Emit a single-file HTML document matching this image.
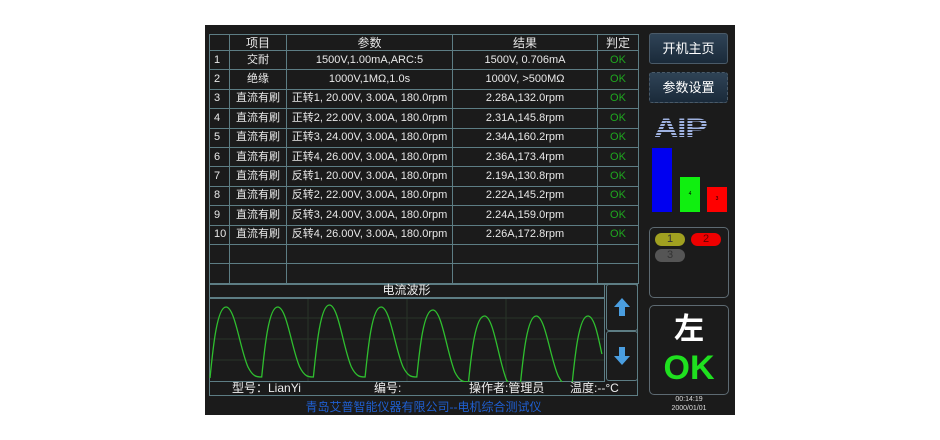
<!DOCTYPE html>
<html><head><meta charset="utf-8"><style>
*{margin:0;padding:0;box-sizing:border-box}
body{width:940px;height:440px;background:#fff;position:relative;overflow:hidden;font-family:"Liberation Sans","Noto Sans CJK SC",sans-serif}
.scr{position:absolute;left:205px;top:25px;width:530px;height:390px;background:#1b1b1b}
.a{position:absolute}
table{position:absolute;left:209px;top:34px;border-collapse:collapse;table-layout:fixed;color:#e8e8e8;font-size:11px}
td{border:1px solid #5d7d84;text-align:center;white-space:nowrap;overflow:hidden;height:19.4px;padding:0;line-height:17px;vertical-align:middle}
tr.h td{height:16px;font-size:12px;line-height:14px}
td.n{text-align:left;padding-left:4px}
td.ok{color:#1fa71f}
.btn{position:absolute;left:649px;width:79px;height:31px;border:1px solid #4a5a68;border-radius:3px;background:linear-gradient(#2f4356,#1a2a3a);color:#fff;font-size:13px;text-align:center;line-height:29px}
.pill{position:absolute;height:13px;width:30px;border-radius:7px;font-size:11px;line-height:13px;text-align:center}
</style></head><body>
<div class="scr"></div>
<table>
<colgroup><col style="width:20px"><col style="width:57px"><col style="width:166px"><col style="width:145px"><col style="width:41px"></colgroup>
<tr class="h"><td></td><td>项目</td><td>参数</td><td>结果</td><td>判定</td></tr>
<tr><td class="n">1</td><td>交耐</td><td>1500V,1.00mA,ARC:5</td><td>1500V, 0.706mA</td><td class="ok">OK</td></tr>
<tr><td class="n">2</td><td>绝缘</td><td>1000V,1MΩ,1.0s</td><td>1000V, &gt;500MΩ</td><td class="ok">OK</td></tr>
<tr><td class="n">3</td><td>直流有刷</td><td>正转1, 20.00V, 3.00A, 180.0rpm</td><td>2.28A,132.0rpm</td><td class="ok">OK</td></tr>
<tr><td class="n">4</td><td>直流有刷</td><td>正转2, 22.00V, 3.00A, 180.0rpm</td><td>2.31A,145.8rpm</td><td class="ok">OK</td></tr>
<tr><td class="n">5</td><td>直流有刷</td><td>正转3, 24.00V, 3.00A, 180.0rpm</td><td>2.34A,160.2rpm</td><td class="ok">OK</td></tr>
<tr><td class="n">6</td><td>直流有刷</td><td>正转4, 26.00V, 3.00A, 180.0rpm</td><td>2.36A,173.4rpm</td><td class="ok">OK</td></tr>
<tr><td class="n">7</td><td>直流有刷</td><td>反转1, 20.00V, 3.00A, 180.0rpm</td><td>2.19A,130.8rpm</td><td class="ok">OK</td></tr>
<tr><td class="n">8</td><td>直流有刷</td><td>反转2, 22.00V, 3.00A, 180.0rpm</td><td>2.22A,145.2rpm</td><td class="ok">OK</td></tr>
<tr><td class="n">9</td><td>直流有刷</td><td>反转3, 24.00V, 3.00A, 180.0rpm</td><td>2.24A,159.0rpm</td><td class="ok">OK</td></tr>
<tr><td class="n">10</td><td>直流有刷</td><td>反转4, 26.00V, 3.00A, 180.0rpm</td><td>2.26A,172.8rpm</td><td class="ok">OK</td></tr>
<tr><td></td><td></td><td></td><td></td><td></td></tr>
<tr><td></td><td></td><td></td><td></td><td></td></tr>
</table>
<div class="a" style="left:209px;top:284px;width:429px;height:112px;border:1px solid #5d7d84"></div>
<div class="a" style="left:209px;top:284px;width:396px;height:14px;border-bottom:1px solid #5d7d84;border-right:1px solid #5d7d84;color:#eee;font-size:12px;text-align:center;line-height:13px">电流波形</div>
<svg class="a" style="left:209px;top:298px" width="396" height="84">
<g stroke="#283528" stroke-width="1">
<line x1="0" y1="20" x2="396" y2="20"/><line x1="0" y1="41" x2="396" y2="41"/><line x1="0" y1="62" x2="396" y2="62"/>
<line x1="99" y1="0" x2="99" y2="84"/><line x1="198" y1="0" x2="198" y2="84"/><line x1="297" y1="0" x2="297" y2="84"/>
</g>
<rect x="0.5" y="0.5" width="395" height="83" fill="none" stroke="#5d7d84"/>
<path fill="none" stroke="#2fbf2f" stroke-width="1.3" d="M1,80 c3,-30 7,-71 16,-71 c9,0 14,42 22,60 c5,10 9,10 13.7,10 c3,-30 7,-70 16,-70 c9,0 14,42 22,60 c5,10 9,10 13.7,10 c3,-30 7,-72 16,-72 c9,0 14,44 22,62 c5,10 9,10 13.7,10 c3,-30 7,-70 16,-70 c9,0 14,42 22,60 c5,10 9,10 13.7,10 c3,-30 7,-67 16,-67 c9,0 14,42 22,62 c5,10 9,10 13.7,10 c3,-30 7,-66 16,-66 c9,0 14,44 22,64 c5,8 9,8 13.7,6 c3,-30 7,-70 16,-70 c9,0 14,42 22,60 c5,10 9,10 13.7,10 c3,-30 7,-70 16,-70 c7,0 11,25 14,38"/>
</svg>
<div class="a" style="left:606px;top:284px;width:32px;height:47px;border:1px solid #5d7d84;border-radius:3px"></div>
<div class="a" style="left:606px;top:331px;width:32px;height:50px;border:1px solid #5d7d84;border-radius:3px"></div>
<svg class="a" style="left:613px;top:297px" width="18" height="20"><path d="M9,1 L17,10 L12,10 L12,19 L6,19 L6,10 L1,10 Z" fill="#4a9ee0"/></svg>
<svg class="a" style="left:613px;top:346px" width="18" height="20"><path d="M9,19 L17,10 L12,10 L12,1 L6,1 L6,10 L1,10 Z" fill="#4a9ee0"/></svg>
<div class="a" style="left:209px;top:381px;width:429px;height:15px;color:#eee;font-size:12px;line-height:14px">
<span class="a" style="left:23px">型号：LianYi</span><span class="a" style="left:165px">编号:</span><span class="a" style="left:260px">操作者:管理员</span><span class="a" style="left:361px">温度:--°C</span></div>
<div class="a" style="left:209px;top:398px;width:429px;text-align:center;color:#1f5fd0;font-size:12px">青岛艾普智能仪器有限公司--电机综合测试仪</div>
<div class="btn" style="top:33px">开机主页</div>
<div class="btn" style="top:72px;border-style:dashed">参数设置</div>
<div class="a" style="left:654px;top:115px;width:70px;height:26px;font:900 27px/26px 'Liberation Sans',sans-serif;color:#8aa0d8;transform:scaleX(1.25);transform-origin:left;letter-spacing:-1px;background:repeating-linear-gradient(#9fb2e0 0 2px,#1b1b1b 2px 3px);-webkit-background-clip:text;-webkit-text-fill-color:transparent">AIP</div>
<div class="a" style="left:652px;top:148px;width:20px;height:64px;background:#0000f0"></div>
<div class="a" style="left:680px;top:177px;width:20px;height:35px;background:#10ef10;font-size:5px;text-align:center;line-height:35px">4</div>
<div class="a" style="left:707px;top:187px;width:20px;height:25px;background:#f00;font-size:5px;text-align:center;line-height:25px">3</div>
<div class="a" style="left:649px;top:227px;width:80px;height:71px;border:1px solid #5d6a72;border-radius:5px"></div>
<div class="pill" style="left:655px;top:233px;background:#a0a020;color:#333">1</div>
<div class="pill" style="left:691px;top:233px;background:#e00;color:#600">2</div>
<div class="pill" style="left:655px;top:249px;background:#555;color:#333">3</div>
<div class="a" style="left:649px;top:305px;width:80px;height:90px;border:1px solid #5d6a72;border-radius:5px"></div>
<div class="a" style="left:649px;top:312px;width:80px;text-align:center;color:#fff;font-size:30px;font-weight:bold;line-height:36px">左</div>
<div class="a" style="left:649px;top:348px;width:80px;text-align:center;color:#1fe01f;font-size:34px;font-weight:bold;line-height:40px">OK</div>
<div class="a" style="left:649px;top:395px;width:80px;text-align:center;color:#ddd;font-size:7px;line-height:9px">00:14:19<br>2000/01/01</div>
</body></html>
